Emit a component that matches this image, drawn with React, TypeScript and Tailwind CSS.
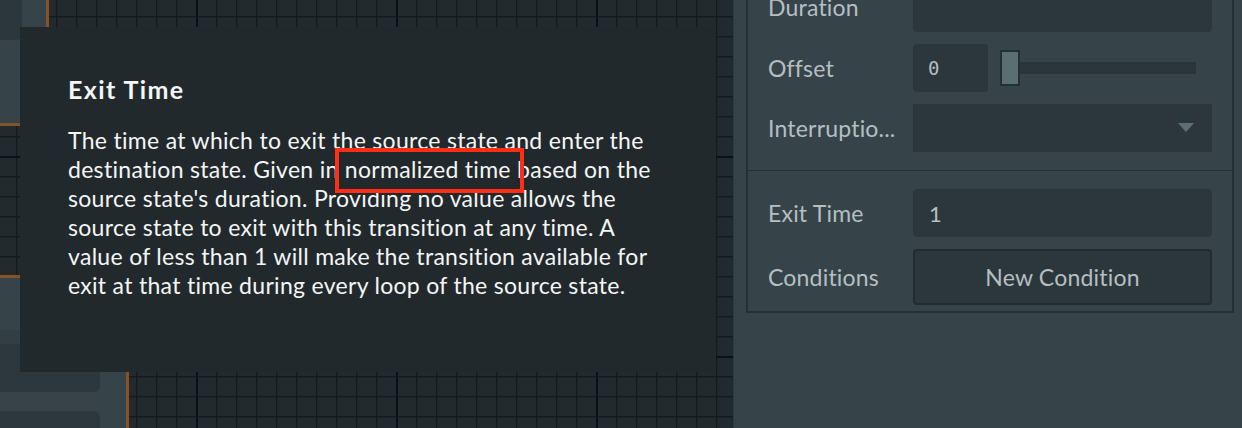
const minorX = Array.from({ length: 37 }, (_, i) => 16 + i * 20);
const minorY = Array.from({ length: 22 }, (_, i) => 16 + i * 20);
const majorX = [196, 396, 596];
const majorY = [156, 356];

function CanvasGrid() {
    return (
        <svg className="absolute inset-0" width="733" height="428">
            <rect width="733" height="428" fill="#222a2d" />
            {minorX.map((x) => (
                <rect key={`vx${x}`} x={x} y={0} width={1.3} height={428} fill="#131b22" />
            ))}
            {minorY.map((y) => (
                <rect key={`hy${y}`} x={0} y={y} width={733} height={1.3} fill="#131b22" />
            ))}
            {majorX.map((x) => (
                <rect key={`mx${x}`} x={x} y={0} width={2} height={428} fill="#0a1119" />
            ))}
            {majorY.map((y) => (
                <rect key={`my${y}`} x={0} y={y} width={733} height={2} fill="#0a1119" />
            ))}
        </svg>
    );
}

function Label({ children }: { children: React.ReactNode }) {
    return <div className="w-[145px] shrink-0 whitespace-nowrap text-[23px] tracking-[0.2px] text-[#b5bfc2]">{children}</div>;
}

export default function App() {
    return (
        <div
            className="relative flex h-[428px] w-[1242px] overflow-hidden bg-[#36444a]"
            style={{ fontFamily: "Lato, 'Open Sans', sans-serif" }}
        >
            {/* node canvas */}
            <div className="relative h-full w-[733px] shrink-0 overflow-hidden">
                <CanvasGrid />

                {/* top-left node */}
                <div className="absolute -left-[10px] -top-[10px] h-[136px] w-[59px] border-b-[3px] border-r-[3px] border-[#85522a] bg-[#36444a]">
                    <div className="h-[50px] w-[32px] rounded-br-md bg-[#2b373c]" />
                </div>

                {/* bottom-left node */}
                <div className="absolute -left-[10px] top-[275px] h-[170px] w-[139px] border-r-[3px] border-t-[3px] border-[#85522a] bg-[#36444a]">
                    <div className="mt-[52px] h-[14px] w-[110px] bg-[#313e43]" />
                    <div className="h-[48px] w-[110px] rounded-br-md bg-[#2c383d]" />
                    <div className="mt-[19px] h-[40px] w-[110px] rounded-tr-md bg-[#2c383d]" />
                </div>

                {/* tooltip */}
                <div className="absolute left-[20px] top-[27px] h-[345px] w-[696px] bg-[#22292c] px-[48px] pt-[46px] text-[#f4f6f6]">
                    <div className="text-[25px] font-bold leading-[32px] tracking-[1.4px]">Exit Time</div>
                    <p className="mt-[21px] whitespace-nowrap text-[23px] leading-[29px] tracking-[0.3px]">
                        The time at which to exit the source state and enter the
                        <br />
                        destination state. Given in{" "}
                        <span className="relative">
                            normalized time
                            <span className="absolute -bottom-[10px] -left-[10px] -right-[13px] -top-[7px] border-[4px] border-[#ff2e14]" />
                        </span>{" "}
                        based on the
                        <br />
                        source state's duration. Providing no value allows the
                        <br />
                        source state to exit with this transition at any time. A
                        <br />
                        value of less than 1 will make the transition available for
                        <br />
                        exit at that time during every loop of the source state.
                    </p>
                </div>
            </div>

            {/* inspector */}
            <div className="h-full flex-1 border-l border-[#2f3b40] pl-[12px] pr-[8px]">
                <div className="-mt-[18px] flex h-[331px] flex-col border-2 border-t-0 border-[#263034]">
                    <div className="flex flex-col gap-[12px] pb-[18px] pl-[20px] pr-[20px] pt-0">
                        <div className="flex h-[50px] items-center">
                            <Label>Duration</Label>
                            <div className="h-full flex-1 rounded-[4px] bg-[#2c373c]" />
                        </div>
                        <div className="flex h-[48px] items-center">
                            <Label>Offset</Label>
                            <div className="flex h-full w-[75px] items-center rounded-[4px] bg-[#2c373c] pl-[15px] text-[19px] text-[#b5bfc2]" style={{ fontFamily: "'DejaVu Sans Mono', monospace" }}>
                                0
                            </div>
                            <div className="ml-[12px] flex flex-1 items-center pr-[16px]">
                                <div className="h-[36px] w-[20px] border-2 border-[#243035] bg-[#5b6f73]" />
                                <div className="h-[12px] flex-1 bg-[#2b363b]" />
                            </div>
                        </div>
                        <div className="flex h-[48px] items-center">
                            <Label>Interruptio...</Label>
                            <div className="flex h-full flex-1 items-center justify-end bg-[#2c373c] pr-[18px]">
                                <svg width="16" height="10" viewBox="0 0 16 10">
                                    <path d="M0 0 H16 L8 9 Z" fill="#5e7073" />
                                </svg>
                            </div>
                        </div>
                    </div>
                    <div className="h-[1px] bg-[#263034]" />
                    <div className="flex flex-col gap-[12px] px-[20px] pt-[18px]">
                        <div className="flex h-[48px] items-center">
                            <Label>Exit Time</Label>
                            <div className="flex h-full flex-1 items-center rounded-[4px] bg-[#2c373c] pl-[16px] text-[22px] text-[#b5bfc2]">
                                1
                            </div>
                        </div>
                        <div className="flex h-[56px] items-center">
                            <Label>Conditions</Label>
                            <div className="flex h-full flex-1 items-center justify-center rounded-[4px] border-2 border-[#222b2f] bg-[#2c373c] text-[23px] tracking-[0.2px] text-[#b5bfc2]">
                                New Condition
                            </div>
                        </div>
                    </div>
                </div>
            </div>
        </div>
    );
}
